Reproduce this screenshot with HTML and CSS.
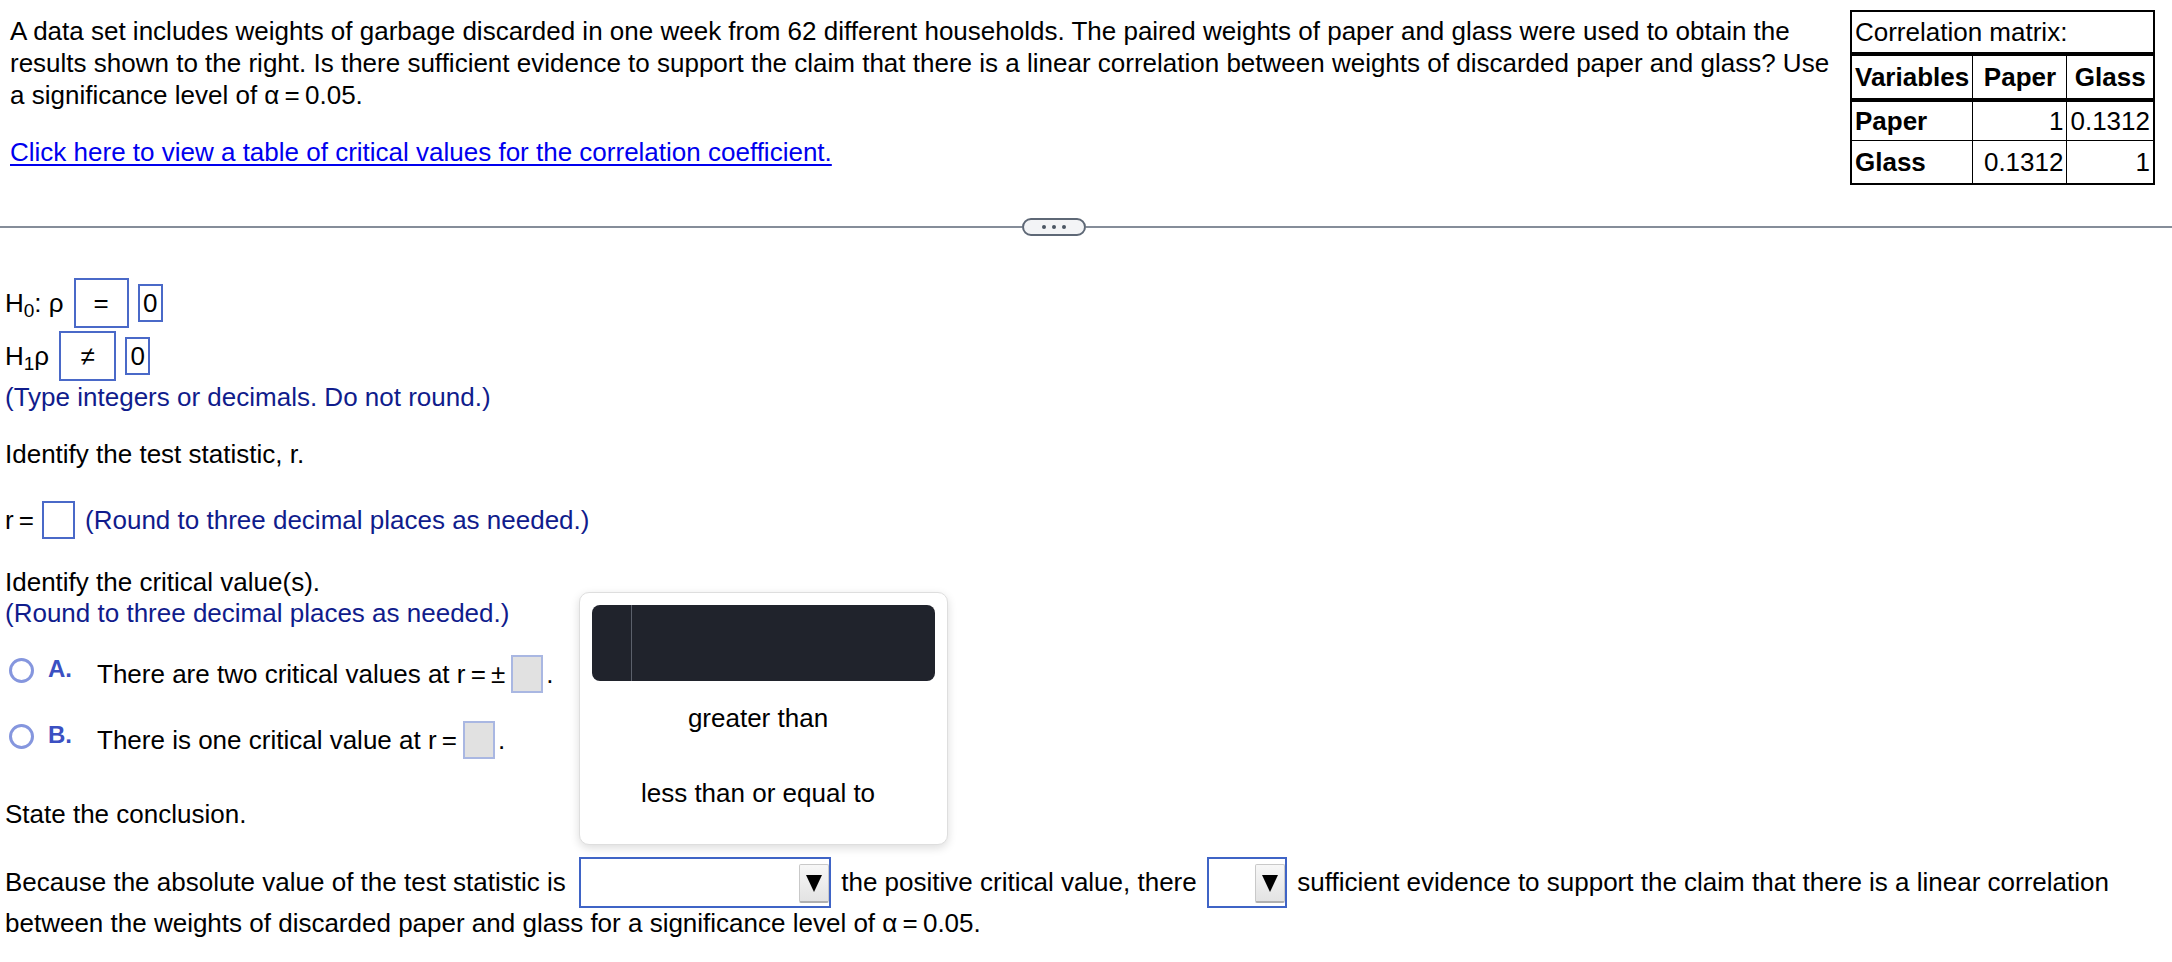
FILE: index.html
```html
<!DOCTYPE html>
<html>
<head>
<meta charset="utf-8">
<title>Correlation test</title>
<link rel="stylesheet" href="styles.css">
</head>
<body>
<div class="top">
  <div class="question">
    <p class="qtext">A data set includes weights of garbage discarded in one week from 62 different households. The paired weights of paper and glass were used to obtain the results shown to the right. Is there sufficient evidence to support the claim that there is a linear correlation between weights of discarded paper and glass? Use a significance level of α&#8201;=&#8201;0.05.</p>
    <a class="link" href="#">Click here to view a table of critical values for the correlation coefficient.</a>
  </div>
  <table class="matrix">
    <colgroup><col class="c1"><col class="c2"><col class="c3"></colgroup>
    <tr class="cap"><td colspan="3">Correlation matrix:</td></tr>
    <tr class="head"><th>Variables</th><th class="ctr">Paper</th><th class="ctr">Glass</th></tr>
    <tr class="r1"><th>Paper</th><td class="num">1</td><td class="num">0.1312</td></tr>
    <tr class="r2"><th>Glass</th><td class="num">0.1312</td><td class="num">1</td></tr>
  </table>
</div>

<div class="divider">
  <span class="rule"></span>
  <span class="pill"><i></i><i></i><i></i></span>
  <span class="rule"></span>
</div>

<div class="work">
  <div class="hyp h0"><span class="hlabel">H<sub>0</sub>: ρ</span><span class="opbox">=</span><span class="valbox">0</span></div>
  <div class="hyp h1"><span class="hlabel">H<sub>1</sub>ρ</span><span class="opbox">≠</span><span class="valbox">0</span></div>
  <p class="note">(Type integers or decimals. Do not round.)</p>

  <p class="plain ident">Identify the test statistic, r.</p>

  <div class="rrow"><span>r&#8201;=</span><span class="rbox"></span><span class="note inl">(Round to three decimal places as needed.)</span></div>

  <div class="crit">
    <p class="plain">Identify the critical value(s).</p>
    <p class="note">(Round to three decimal places as needed.)</p>
  </div>

  <div class="opt optA"><span class="radio"></span><span class="olabel">A.</span><span class="otext">There are two critical values at r&#8201;=&#8201;±</span><span class="gbox"></span><span>.</span></div>
  <div class="opt optB"><span class="radio"></span><span class="olabel">B.</span><span class="otext">There is one critical value at r&#8201;=</span><span class="gbox"></span><span>.</span></div>

  <p class="plain state">State the conclusion.</p>

  <p class="concl"><span>Because the absolute value of the test statistic is</span> <span class="dd dd1"><span class="ddbtn"><span class="tri"></span></span></span> <span>the positive critical value, there</span> <span class="dd dd2"><span class="ddbtn"><span class="tri"></span></span></span> <span>sufficient evidence to support the claim that there is a linear correlation</span> <span>between the weights of discarded paper and glass for a significance level of α&#8201;=&#8201;0.05.</span></p>

  <div class="menu">
    <div class="menubar"><span class="caret"></span></div>
    <div class="mopt">greater than</div>
    <div class="mopt">less than or equal to</div>
  </div>
</div>
</body>
</html>
```

FILE: styles.css
```css
html, body {
  margin: 0;
  padding: 0;
  background: #ffffff;
}
body {
  font-family: "Liberation Sans", Arial, Helvetica, sans-serif;
  font-size: 26px;
  color: #000;
  width: 2172px;
  overflow: hidden;
}
p { margin: 0; }

/* top area */
.top {
  display: flex;
  align-items: flex-start;
  height: 218px;
  box-sizing: border-box;
  padding-top: 10px;
  padding-left: 10px;
}
.question {
  flex: 1;
  padding-top: 5px;
}
.qtext {
  line-height: 32px;
}
.link {
  display: inline-block;
  margin-top: 25px;
  line-height: 32px;
  color: #0000ee;
  text-decoration: underline;
  text-underline-offset: 3px;
}
.matrix {
  border-collapse: collapse;
  margin-left: 17px;
  margin-right: 17px;
  border: 2px solid #000;
  table-layout: fixed;
}
.c1 { width: 122px; }
.c2 { width: 94px; }
.c3 { width: 87px; }
.matrix td, .matrix th {
  border: 1.5px solid #000;
  padding: 0 3px;
  line-height: 32px;
  font-weight: normal;
  text-align: left;
  white-space: nowrap;
}
.matrix th { font-weight: bold; }
.matrix .ctr { text-align: center; }
.matrix .num { text-align: right; }
.matrix .cap td { height: 40px; border-bottom: 4px solid #000; }
.matrix .head th { height: 42px; border-bottom: 4px solid #000; }
.matrix .r1 th, .matrix .r1 td { height: 38px; }
.matrix .r2 th, .matrix .r2 td { height: 42px; }

/* divider */
.divider {
  display: grid;
  grid-template-columns: 1022px 64px 1fr;
  align-items: center;
  height: 18px;
}
.rule {
  height: 2px;
  background: #858d99;
}
.pill {
  box-sizing: border-box;
  height: 18px;
  border: 2px solid #5e6876;
  border-radius: 9px;
  background: #f3f4f6;
  display: flex;
  align-items: center;
  justify-content: center;
  gap: 6px;
}
.pill i {
  width: 4px;
  height: 4px;
  border-radius: 50%;
  background: #4b5563;
}

/* work area */
.work {
  position: relative;
  padding-left: 5px;
}
.hyp {
  display: flex;
  align-items: center;
  height: 50px;
  line-height: 32px;
}
.h0 { margin-top: 42px; }
.h1 { margin-top: 3px; }
.hlabel sub {
  font-size: 19px;
  vertical-align: -5px;
  line-height: 0;
}
.opbox {
  box-sizing: border-box;
  height: 50px;
  border: 2px solid #4a69c8;
  display: flex;
  align-items: center;
  justify-content: center;
}
.h0 .opbox { width: 55px; margin-left: 10px; }
.h1 .opbox { width: 57px; margin-left: 10px; }
.valbox {
  box-sizing: border-box;
  width: 25px;
  height: 38px;
  border: 2px solid #4a69c8;
  display: flex;
  align-items: center;
  justify-content: center;
  margin-left: 9px;
}
.note {
  color: #101c8c;
  line-height: 32px;
}
.plain { line-height: 32px; }
.ident { margin-top: 25px; }

.rrow {
  display: flex;
  align-items: center;
  height: 38px;
  margin-top: 31px;
  line-height: 32px;
}
.rbox {
  box-sizing: border-box;
  width: 33px;
  height: 38px;
  border: 2px solid #4a69c8;
  margin-left: 8px;
  margin-right: 10px;
}
.crit {
  margin-top: 28px;
}
.crit .plain, .crit .note { line-height: 31px; }

.opt {
  display: flex;
  align-items: center;
  height: 38px;
  line-height: 32px;
}
.optA { margin-top: 26px; }
.optB { margin-top: 28px; }
.radio {
  box-sizing: border-box;
  width: 25px;
  height: 25px;
  border-radius: 50%;
  border: 3px solid #8596de;
  background: #fff;
  margin-left: 4px;
  margin-bottom: 8px;
}
.olabel {
  font-size: 24px;
  line-height: 24px;
  font-weight: bold;
  color: #3b50c2;
  margin-left: 14px;
  margin-bottom: 10px;
  width: 49px;
}
.gbox {
  box-sizing: border-box;
  width: 32px;
  height: 38px;
  background: #e1e1e1;
  border: 2px solid #a9b7e2;
  margin-left: 6px;
  margin-right: 3px;
}
.state { margin-top: 39px; }

.concl {
  margin-top: 32px;
  line-height: 41px;
  padding-right: 20px;
}
.dd {
  position: relative;
  display: inline-block;
  box-sizing: border-box;
  height: 51px;
  border: 2px solid #3f64c6;
  background: #fff;
  vertical-align: -11px;
}
.dd1 { width: 252px; margin: -6px 3px -6px 6px; }
.dd2 { width: 80px; margin: -6px 3px -6px 3px; }
.ddbtn {
  position: absolute;
  right: 0;
  top: 5px;
  box-sizing: border-box;
  width: 30px;
  height: 39px;
  border: 1px solid #c9c9c9;
  border-bottom: 2px solid #b0b0b0;
  border-radius: 2px;
  background: linear-gradient(#f7f7f7, #e3e3e3);
  display: flex;
  align-items: center;
  justify-content: center;
}
.tri {
  width: 0;
  height: 0;
  border-left: 8px solid transparent;
  border-right: 8px solid transparent;
  border-top: 17px solid #000;
}

/* open menu, floating over the conclusion area */
.menu {
  position: absolute;
  left: 579px;
  top: 314px;
  box-sizing: border-box;
  width: 369px;
  height: 253px;
  background: #fff;
  border: 1px solid #dedede;
  border-radius: 10px;
  box-shadow: 0 3px 10px rgba(0, 0, 0, 0.14);
  padding: 12px;
  display: flex;
  flex-direction: column;
  z-index: 5;
}
.menubar {
  position: relative;
  height: 76px;
  background: #20232c;
  border-radius: 8px;
  flex: none;
}
.caret {
  position: absolute;
  left: 39px;
  top: 0;
  bottom: 0;
  width: 1px;
  background: #5b606b;
}
.mopt {
  height: 75px;
  line-height: 75px;
  text-align: center;
  padding-right: 11px;
  white-space: nowrap;
}
```
